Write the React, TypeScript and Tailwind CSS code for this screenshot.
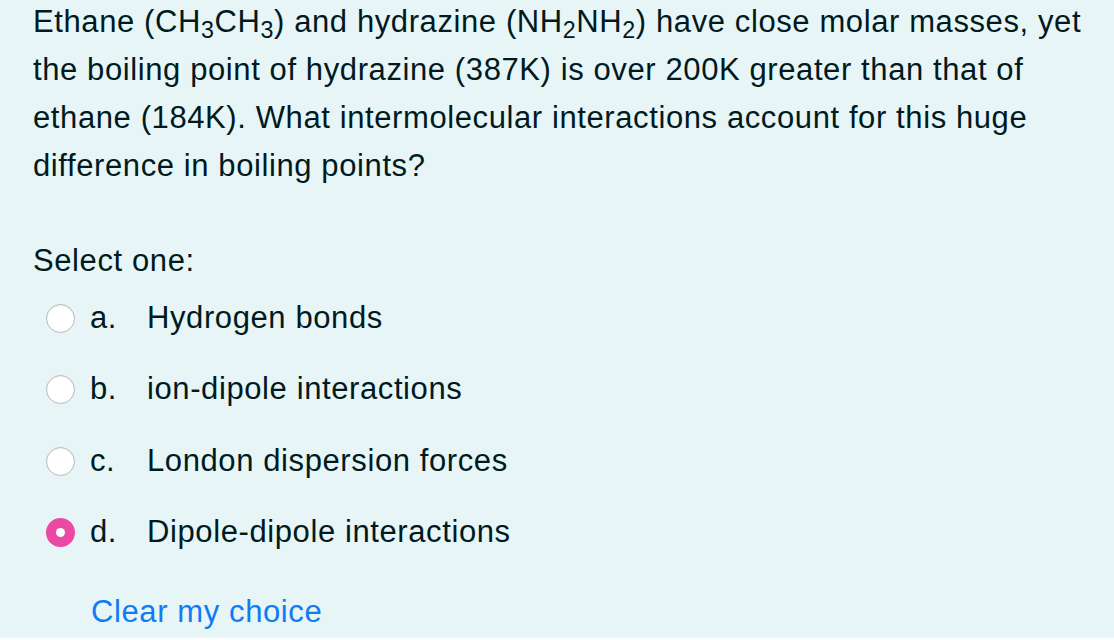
import { useState } from 'react';

const options = [
  { key: 'a', label: 'Hydrogen bonds' },
  { key: 'b', label: 'ion-dipole interactions' },
  { key: 'c', label: 'London dispersion forces' },
  { key: 'd', label: 'Dipole-dipole interactions' },
];

const Radio = ({ checked }: { checked: boolean }) =>
  checked ? (
    <span className="flex h-[29px] w-[29px] shrink-0 items-center justify-center rounded-full bg-[#eb4aa4]">
      <span className="block h-[9px] w-[9px] rounded-full bg-white" />
    </span>
  ) : (
    <span className="block h-[29px] w-[29px] shrink-0 rounded-full border border-[#b8b8b8] bg-white shadow-[inset_0_1px_2px_rgba(0,0,0,0.06)]" />
  );

export default function App() {
  const [selected, setSelected] = useState('d');

  return (
    <div
      className="min-h-[640px] w-full bg-[#e7f5f7] pl-[33px] pr-[20px] text-[#001a1e] text-[31px] tracking-[0.6px]"
      style={{ fontFamily: '"Liberation Sans", Arial, sans-serif' }}
    >
      <p className="-mt-[2px] leading-[48px] pt-0">
        Ethane (CH<sub>3</sub>CH<sub>3</sub>) and hydrazine (NH<sub>2</sub>NH<sub>2</sub>) have close molar
        masses, yet the boiling point of hydrazine (387K) is over 200K greater than that of ethane (184K). What
        intermolecular interactions account for this huge difference in boiling points?
      </p>

      <div className="mt-[47px] leading-[48px]">Select one:</div>

      <div className="mt-[9px] flex flex-col gap-[23.5px]">
        {options.map((o) => (
          <label
            key={o.key}
            className="flex h-[48px] cursor-pointer items-center"
            onClick={() => setSelected(o.key)}
          >
            <span className="ml-[13px]">
              <Radio checked={selected === o.key} />
            </span>
            <span className="ml-[15px] w-[57px]">{o.key}.</span>
            <span>{o.label}</span>
          </label>
        ))}
      </div>

      <button
        className="mt-[31px] pl-[58px] leading-[48px] tracking-[0.6px] text-[#0f7bf5]"
        onClick={() => setSelected('')}
      >
        Clear my choice
      </button>
    </div>
  );
}
